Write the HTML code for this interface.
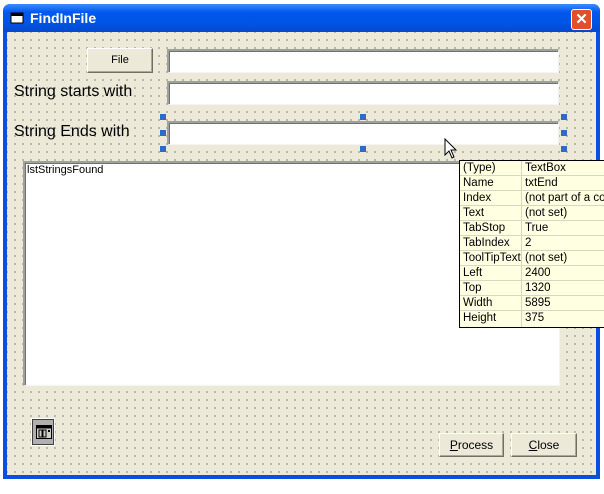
<!DOCTYPE html>
<html><head><style>
*{margin:0;padding:0;box-sizing:border-box}
body{width:604px;height:494px;background:#fff;position:relative;overflow:hidden;font-family:"Liberation Sans",sans-serif}
.win{position:absolute;left:3px;top:4px;width:597px;height:475px;background:#0a4fe0;border-radius:7px 7px 0 0}
.title{position:absolute;left:0;top:0;width:100%;height:28px;border-radius:7px 7px 0 0;background:linear-gradient(#3a8cff,#0058ee 30%,#0054e3 70%,#0648cc)}
.title span{position:absolute;left:27px;top:6px;color:#fff;font-weight:bold;font-size:14px;font-family:"Liberation Sans",sans-serif}
.client{position:absolute;left:4px;top:28px;width:589px;height:443px;background-color:#ece9d8;background-image:radial-gradient(circle,#222 0.55px,transparent 0.7px);background-size:8px 8px;background-position:4px 4px}
.abs{position:absolute}
.tb{position:absolute;background:#fff;border-top:2px solid #a0a0a0;border-left:2px solid #a0a0a0;border-right:1px solid #f4f4f0;border-bottom:1px solid #f4f4f0;box-shadow:inset 1px 1px 0 #707070}
.btn{position:absolute;background:#ece9d8;border:1px solid;border-color:#fff #716f64 #716f64 #fff;box-shadow:inset -1px -1px 0 #aca899;font-size:11px;text-align:center;color:#000;font-family:"Liberation Sans",sans-serif}
.lbl{position:absolute;font-size:16px;color:#000;font-family:"Liberation Sans",sans-serif}
.h{position:absolute;width:6px;height:6px;background:#316ac5}
.tip{position:absolute;left:459px;top:160px;width:150px;height:168px;background:#ffffe1;border:1px solid #000;font-size:11.5px;font-family:"Liberation Sans",sans-serif}
.tip div{height:15px;line-height:15px;border-bottom:1px solid #d8d8c0;position:relative;white-space:nowrap}
.tip b{font-weight:normal;position:absolute;left:3px}
.tip i{font-style:normal;position:absolute;left:65px}
.tip:after{content:"";position:absolute;left:61px;top:0;bottom:0;border-left:1px solid #d8d8c0}
</style></head><body>
<div class="win">
<div class="title">
<svg class="abs" style="left:7px;top:8px" width="14" height="12"><rect x="1" y="1" width="12" height="10" fill="#fff" stroke="#000"/><rect x="1" y="1" width="12" height="3" fill="#000"/></svg>
<span>FindInFile</span>
<div class="abs" style="left:568px;top:5px;width:21px;height:21px;border:1px solid #fff;border-radius:3px;background:#e0502a;color:#fff;font-size:15px;font-weight:bold;text-align:center;line-height:19px">✕</div>
</div>
<div class="client"></div>
</div>
<div class="btn" style="left:87px;top:48px;width:66px;height:25px;line-height:23px">File</div>
<div class="tb" style="left:167px;top:49px;width:392px;height:24px"></div>
<div class="lbl" style="left:14px;top:83px">String starts with</div>
<div class="tb" style="left:167px;top:81px;width:392px;height:24px"></div>
<div class="lbl" style="left:14px;top:123px">String Ends with</div>
<div class="tb" style="left:167px;top:121px;width:392px;height:24px"></div>
<div class="h" style="left:160px;top:114px"></div><div class="h" style="left:360px;top:114px"></div><div class="h" style="left:561px;top:114px"></div>
<div class="h" style="left:160px;top:130px"></div><div class="h" style="left:561px;top:130px"></div>
<div class="h" style="left:160px;top:146px"></div><div class="h" style="left:360px;top:146px"></div><div class="h" style="left:561px;top:146px"></div>
<div class="tb" style="left:23px;top:161px;width:537px;height:225px;font-size:11px;padding:1px 2px;font-family:'Liberation Sans',sans-serif">lstStringsFound</div>
<svg class="abs" style="left:444px;top:138px" width="14" height="22"><path d="M1 1 L1 17 L5 13 L8 20 L10 19 L7 12 L12 12 Z" fill="#fff" stroke="#000"/></svg>
<div class="tip">
<div><b>(Type)</b><i>TextBox</i></div><div><b>Name</b><i>txtEnd</i></div><div><b>Index</b><i>(not part of a co</i></div><div><b>Text</b><i>(not set)</i></div><div><b>TabStop</b><i>True</i></div><div><b>TabIndex</b><i>2</i></div><div><b>ToolTipText</b><i>(not set)</i></div><div><b>Left</b><i>2400</i></div><div><b>Top</b><i>1320</i></div><div><b>Width</b><i>5895</i></div><div style="border:0"><b>Height</b><i>375</i></div>
</div>
<div class="abs" style="left:31px;top:418px;width:24px;height:28px;background:#fff;padding:1px"><div style="width:22px;height:26px;background:#b0b0b0;border:1px solid #404040;position:relative"><svg class="abs" style="left:3px;top:5px" width="16" height="14"><rect x="0.5" y="0.5" width="15" height="13" fill="#d4d0c8" stroke="#000"/><rect x="0.5" y="0.5" width="15" height="3" fill="#000"/><rect x="3" y="5" width="3" height="7" fill="none" stroke="#000"/><rect x="7" y="5" width="3" height="7" fill="none" stroke="#000"/><rect x="12" y="5" width="2" height="2" fill="#000"/></svg></div></div>
<div class="btn" style="left:439px;top:433px;width:65px;height:24px;line-height:22px;font-size:12px"><u>P</u>rocess</div>
<div class="btn" style="left:511px;top:433px;width:66px;height:24px;line-height:22px;font-size:12px"><u>C</u>lose</div>
</body></html>
